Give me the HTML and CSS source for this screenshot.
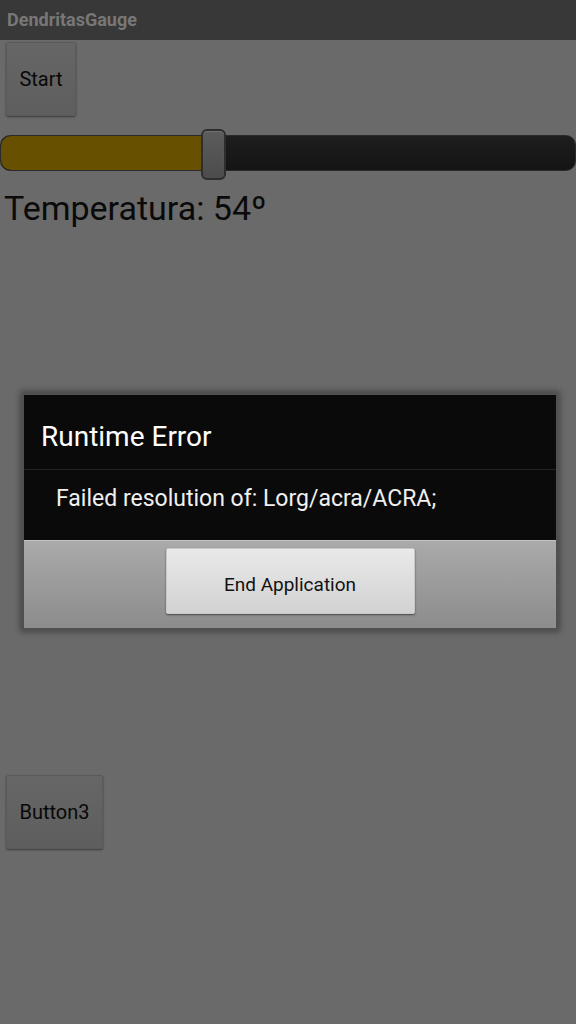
FILE: index.html
```html
<!DOCTYPE html>
<html>
<head>
<meta charset="utf-8">
<link rel="stylesheet" href="styles.css">
</head>
<body>
<div class="screen">
  <div class="titlebar">DendritasGauge</div>
  <div class="content">
    <div class="btn btn-start">Start</div>
    <div class="slider">
      <div class="fill" style="width:205px"></div>
      <div class="thumb"></div>
    </div>
    <div class="temp">Temperatura: 54º</div>
    <div class="spacer"></div>
    <div class="btn btn-3">Button3</div>
  </div>
  <div class="overlay">
    <div class="dialog">
      <div class="dlg-title">Runtime Error</div>
      <div class="dlg-msg">Failed resolution of: Lorg/acra/ACRA;</div>
      <div class="dlg-actions">
        <div class="dlg-btn">End Application</div>
      </div>
    </div>
  </div>
</div>
</body>
</html>
```
FILE: styles.css
```css
* { box-sizing: border-box; }
html, body { margin: 0; padding: 0; }
body {
  width: 576px;
  height: 1024px;
  background: #6a6a6a;
  font-family: Roboto, "Noto Sans", sans-serif;
  overflow: hidden;
}
.screen {
  position: relative;
  width: 576px;
  height: 1024px;
  background: #6a6a6a;
}
.titlebar {
  height: 40px;
  background: #383838;
  color: #777777;
  font-weight: bold;
  font-size: 18px;
  line-height: 40px;
  padding-left: 7px;
}
.content {
  display: flex;
  flex-direction: column;
  align-items: flex-start;
}
.btn {
  background: linear-gradient(#666, #5e5e5e);
  border: 1px solid #5a5a5a;
  border-radius: 2px;
  box-shadow: 0 1px 2px rgba(0,0,0,0.45);
  color: #080808;
  font-size: 20px;
  display: flex;
  align-items: center;
  justify-content: center;
}
.btn-start {
  margin: 2px 0 0 6px;
  width: 70px;
  height: 74px;
}
.slider {
  position: relative;
  margin-top: 19px;
  width: 576px;
  height: 36px;
  border-radius: 10px;
  background: linear-gradient(#1e1e1e, #141414);
  border: 1px solid #2a2a2a;
}
.fill {
  height: 100%;
  background: #675100;
  border-radius: 10px 0 0 10px;
}
.thumb {
  position: absolute;
  left: 200px;
  top: -7px;
  width: 25px;
  height: 51px;
  border-radius: 6px;
  background: linear-gradient(#5c5c5c, #4c4c4c);
  border: 2px solid #2e2e2e;
  box-shadow: inset 0 1px 1px rgba(255,255,255,0.15);
}
.temp {
  margin: 17px 0 0 4px;
  font-size: 34px;
  color: #0a0a0a;
  line-height: 40px;
}
.spacer { height: 547px; }
.btn-3 {
  margin-left: 6px;
  width: 97px;
  height: 74px;
}
.overlay {
  position: absolute;
  left: 22px;
  top: 393px;
}
.dialog {
  width: 536px;
  border: 2px solid #505050;
  box-shadow: 0 0 6px 2px rgba(0,0,0,0.35);
  background: #0a0a0a;
  display: flex;
  flex-direction: column;
}
.dlg-title {
  height: 75px;
  padding: 8px 0 0 17px;
  display: flex;
  align-items: center;
  color: #ffffff;
  font-size: 28px;
  border-bottom: 1px solid #242424;
}
.dlg-msg {
  height: 70px;
  padding: 15px 0 0 32px;
  color: #f0f0f0;
  font-size: 23px;
}
.dlg-actions {
  height: 88px;
  border-top: 1px solid #c4c4c4;
  background: linear-gradient(#aaaaaa, #8c8c8c);
  display: flex;
  justify-content: center;
  padding-top: 7px;
}
.dlg-btn {
  width: 249px;
  height: 66px;
  padding-top: 7px;
  background: linear-gradient(#e9e9e9, #d2d2d2);
  border: 1px solid #c8c8c8;
  border-radius: 2px;
  box-shadow: 0 1px 2px rgba(0,0,0,0.5);
  color: #111;
  font-size: 19px;
  display: flex;
  align-items: center;
  justify-content: center;
}
```
